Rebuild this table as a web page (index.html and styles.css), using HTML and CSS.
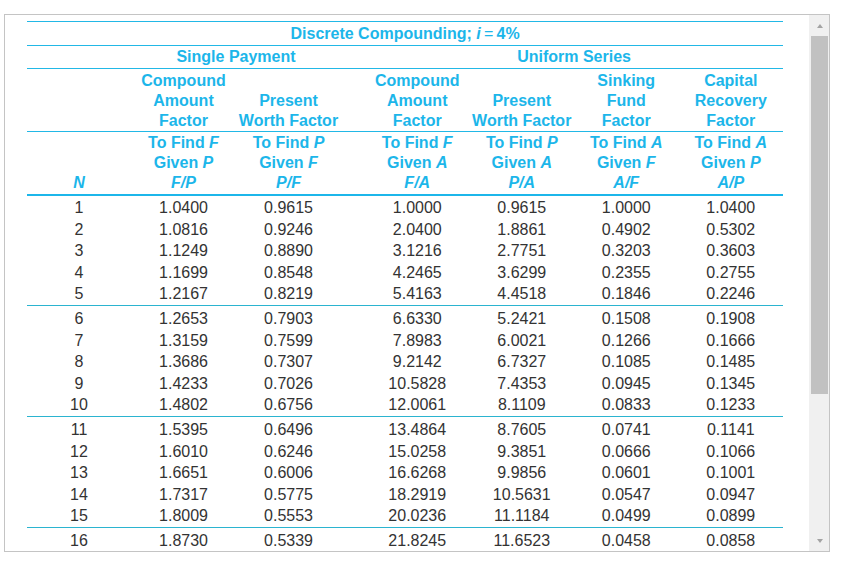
FILE: index.html
```html
<!DOCTYPE html>
<html lang="en">
<head>
<meta charset="utf-8">
<title>Discrete Compounding; i = 4%</title>
<link rel="stylesheet" href="styles.css">
</head>
<body>
<div class="frame">
  <div class="viewport">
    <table class="factors">
      <colgroup>
        <col class="c-n"><col class="c-sp"><col class="c-sp"><col class="c-gap">
        <col class="c-us"><col class="c-us"><col class="c-us"><col class="c-us">
      </colgroup>
      <thead>
        <tr class="h-title">
          <th colspan="8">Discrete Compounding; <i>i</i><span class="eq">&thinsp;=&thinsp;</span>4%</th>
        </tr>
        <tr class="h-group">
          <th></th>
          <th colspan="2">Single Payment</th>
          <th></th>
          <th colspan="4">Uniform Series</th>
        </tr>
        <tr class="h-factor">
          <th></th>
          <th>Compound<br>Amount<br>Factor</th>
          <th>Present<br>Worth Factor</th>
          <th></th>
          <th>Compound<br>Amount<br>Factor</th>
          <th>Present<br>Worth Factor</th>
          <th>Sinking<br>Fund<br>Factor</th>
          <th>Capital<br>Recovery<br>Factor</th>
        </tr>
        <tr class="h-find">
          <th><i>N</i></th>
          <th>To Find <i>F</i><br>Given <i>P</i><br><i>F/P</i></th>
          <th>To Find <i>P</i><br>Given <i>F</i><br><i>P/F</i></th>
          <th></th>
          <th>To Find <i>F</i><br>Given <i>A</i><br><i>F/A</i></th>
          <th>To Find <i>P</i><br>Given <i>A</i><br><i>P/A</i></th>
          <th>To Find <i>A</i><br>Given <i>F</i><br><i>A/F</i></th>
          <th>To Find <i>A</i><br>Given <i>P</i><br><i>A/P</i></th>
        </tr>
      </thead>
      <tbody>
        <tr class="first"><td>1</td><td>1.0400</td><td>0.9615</td><td></td><td>1.0000</td><td>0.9615</td><td>1.0000</td><td>1.0400</td></tr>
        <tr><td>2</td><td>1.0816</td><td>0.9246</td><td></td><td>2.0400</td><td>1.8861</td><td>0.4902</td><td>0.5302</td></tr>
        <tr><td>3</td><td>1.1249</td><td>0.8890</td><td></td><td>3.1216</td><td>2.7751</td><td>0.3203</td><td>0.3603</td></tr>
        <tr><td>4</td><td>1.1699</td><td>0.8548</td><td></td><td>4.2465</td><td>3.6299</td><td>0.2355</td><td>0.2755</td></tr>
        <tr><td>5</td><td>1.2167</td><td>0.8219</td><td></td><td>5.4163</td><td>4.4518</td><td>0.1846</td><td>0.2246</td></tr>
        <tr class="grp"><td>6</td><td>1.2653</td><td>0.7903</td><td></td><td>6.6330</td><td>5.2421</td><td>0.1508</td><td>0.1908</td></tr>
        <tr><td>7</td><td>1.3159</td><td>0.7599</td><td></td><td>7.8983</td><td>6.0021</td><td>0.1266</td><td>0.1666</td></tr>
        <tr><td>8</td><td>1.3686</td><td>0.7307</td><td></td><td>9.2142</td><td>6.7327</td><td>0.1085</td><td>0.1485</td></tr>
        <tr><td>9</td><td>1.4233</td><td>0.7026</td><td></td><td>10.5828</td><td>7.4353</td><td>0.0945</td><td>0.1345</td></tr>
        <tr><td>10</td><td>1.4802</td><td>0.6756</td><td></td><td>12.0061</td><td>8.1109</td><td>0.0833</td><td>0.1233</td></tr>
        <tr class="grp"><td>11</td><td>1.5395</td><td>0.6496</td><td></td><td>13.4864</td><td>8.7605</td><td>0.0741</td><td>0.1141</td></tr>
        <tr><td>12</td><td>1.6010</td><td>0.6246</td><td></td><td>15.0258</td><td>9.3851</td><td>0.0666</td><td>0.1066</td></tr>
        <tr><td>13</td><td>1.6651</td><td>0.6006</td><td></td><td>16.6268</td><td>9.9856</td><td>0.0601</td><td>0.1001</td></tr>
        <tr><td>14</td><td>1.7317</td><td>0.5775</td><td></td><td>18.2919</td><td>10.5631</td><td>0.0547</td><td>0.0947</td></tr>
        <tr><td>15</td><td>1.8009</td><td>0.5553</td><td></td><td>20.0236</td><td>11.1184</td><td>0.0499</td><td>0.0899</td></tr>
        <tr class="grp"><td>16</td><td>1.8730</td><td>0.5339</td><td></td><td>21.8245</td><td>11.6523</td><td>0.0458</td><td>0.0858</td></tr>
      </tbody>
    </table>
  </div>
  <div class="scrollbar">
    <div class="sb-btn"><span class="arrow-up"></span></div>
    <div class="sb-thumb"></div>
    <div class="sb-fill"></div>
    <div class="sb-btn"><span class="arrow-down"></span></div>
  </div>
</div>
</body>
</html>
```
FILE: styles.css
```css
html, body {
  margin: 0;
  padding: 0;
  background: #ffffff;
}

body {
  font-family: "Liberation Sans", Arial, sans-serif;
}

.frame {
  display: flex;
  box-sizing: border-box;
  width: 826px;
  height: 538px;
  margin: 14px 0 0 4px;
  border: 1px solid #c4c4c4;
  background: #ffffff;
}

.viewport {
  flex: 1;
  overflow: hidden;
  padding: 6px 0 0 22px;
}

.factors {
  table-layout: fixed;
  width: 756px;
  border-collapse: separate;
  border-spacing: 0;
}

.c-n { width: 104px; }
.c-sp { width: 105px; }
.c-gap { width: 24px; }
.c-us { width: 104.5px; }

.factors th {
  padding: 0;
  font-size: 16px;
  line-height: 20px;
  font-weight: bold;
  color: #1cb6ea;
  text-align: center;
  vertical-align: bottom;
  white-space: nowrap;
}

.factors th i {
  font-style: italic;
}

.h-title th {
  border-top: 1px solid #22b8e6;
  border-bottom: 1px solid #22b8e6;
  padding: 2px 0 1px;
}

.h-title .eq {
  font-weight: normal;
}

.h-group th {
  border-bottom: 1px solid #22b8e6;
  padding: 1px 0 1px;
}

.h-factor th {
  border-bottom: 1px solid #22b8e6;
  padding: 2px 0 0;
}

.h-find th {
  border-bottom: 2px solid #1cb6ea;
  padding: 1px 0 1px;
}

.factors td {
  padding: 0;
  font-size: 16px;
  line-height: 21.6px;
  color: #333333;
  text-align: center;
  white-space: nowrap;
}

.factors tr.first td {
  padding-top: 1px;
}

.factors tr.grp td {
  border-top: 1px solid #2bb4d0;
  padding-top: 2px;
}

.scrollbar {
  width: 20px;
  background: #f0f0f0;
  display: flex;
  flex-direction: column;
}

.sb-btn {
  height: 21px;
  display: flex;
  align-items: center;
  justify-content: center;
  padding-left: 1px;
}

.arrow-up {
  width: 0;
  height: 0;
  border-left: 3.5px solid transparent;
  border-right: 3.5px solid transparent;
  border-bottom: 4px solid #a3a3a3;
}

.arrow-down {
  width: 0;
  height: 0;
  border-left: 3.5px solid transparent;
  border-right: 3.5px solid transparent;
  border-top: 4px solid #a3a3a3;
}

.sb-thumb {
  height: 358px;
  margin: 0 1px 0 2px;
  background: #c1c1c1;
}

.sb-fill {
  flex: 1;
}
```
